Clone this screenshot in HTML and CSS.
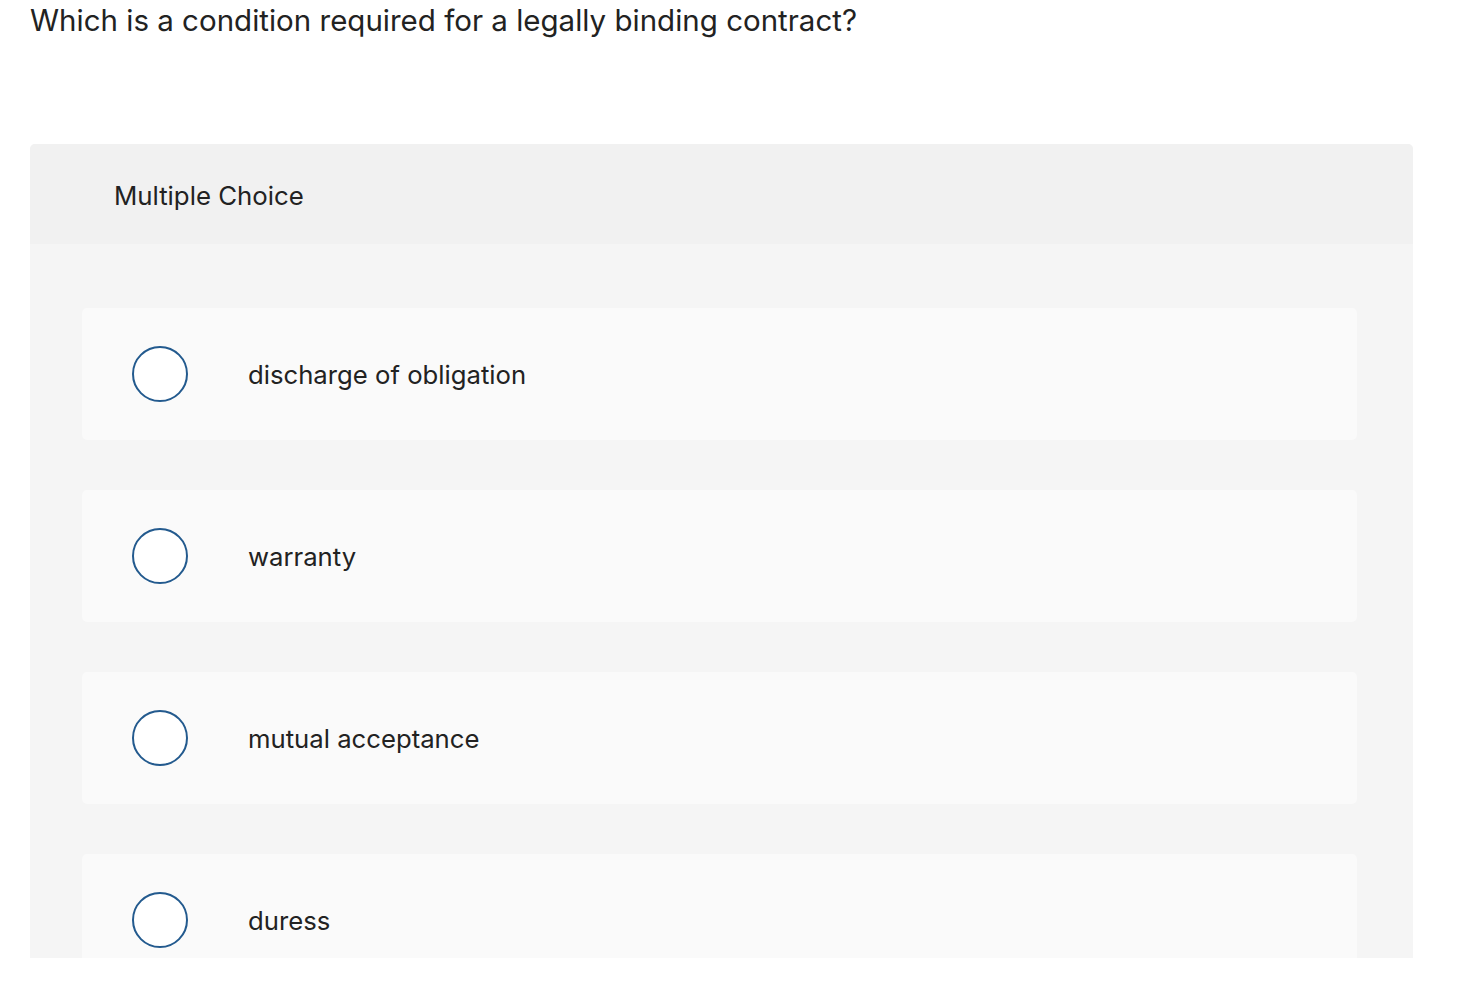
FILE: index.html
```html
<!DOCTYPE html>
<html>
<head>
<meta charset="utf-8">
<link rel="stylesheet" href="styles.css">
</head>
<body>
<div class="page">
  <h1 class="question">Which is a condition required for a legally binding contract?</h1>
  <div class="card">
    <div class="card-header">Multiple Choice</div>
    <div class="card-body">
      <div class="option"><span class="radio"></span><span class="label">discharge of obligation</span></div>
      <div class="option"><span class="radio"></span><span class="label">warranty</span></div>
      <div class="option"><span class="radio"></span><span class="label">mutual acceptance</span></div>
      <div class="option"><span class="radio"></span><span class="label">duress</span></div>
    </div>
  </div>
</div>
</body>
</html>
```
FILE: styles.css
```css
html, body {
  margin: 0;
  padding: 0;
  background: #ffffff;
}
body {
  font-family: "Inter", "Lato", sans-serif;
  color: #222222;
}
.page {
  padding: 0 69px 0 30px;
  height: 958px;
  overflow: hidden;
}
.question {
  margin: 0;
  font-size: 29.5px;
  font-weight: 400;
  line-height: 40px;
  height: 144px;
  color: #222;
}
.card {
  border-radius: 5px 5px 0 0;
  background: #f5f5f5;
  height: 814px;
  overflow: hidden;
}
.card-header {
  background: #f1f1f1;
  height: 100px;
  box-sizing: border-box;
  padding-left: 84px;
  display: flex;
  align-items: center;
  font-size: 25.8px;
  padding-top: 2px;
}
.card-body {
  padding: 64px 56px 0 52px;
  display: flex;
  flex-direction: column;
  gap: 50px;
}
.option {
  background: #fafafa;
  border-radius: 5px;
  height: 132px;
  flex: none;
  display: flex;
  align-items: center;
  padding-left: 50px;
}
.radio {
  width: 52px;
  height: 52px;
  border: 2px solid #235a8e;
  border-radius: 50%;
  background: #ffffff;
  flex: none;
}
.label {
  margin-left: 60px;
  font-size: 25.7px;
  margin-top: 1px;
}
```
